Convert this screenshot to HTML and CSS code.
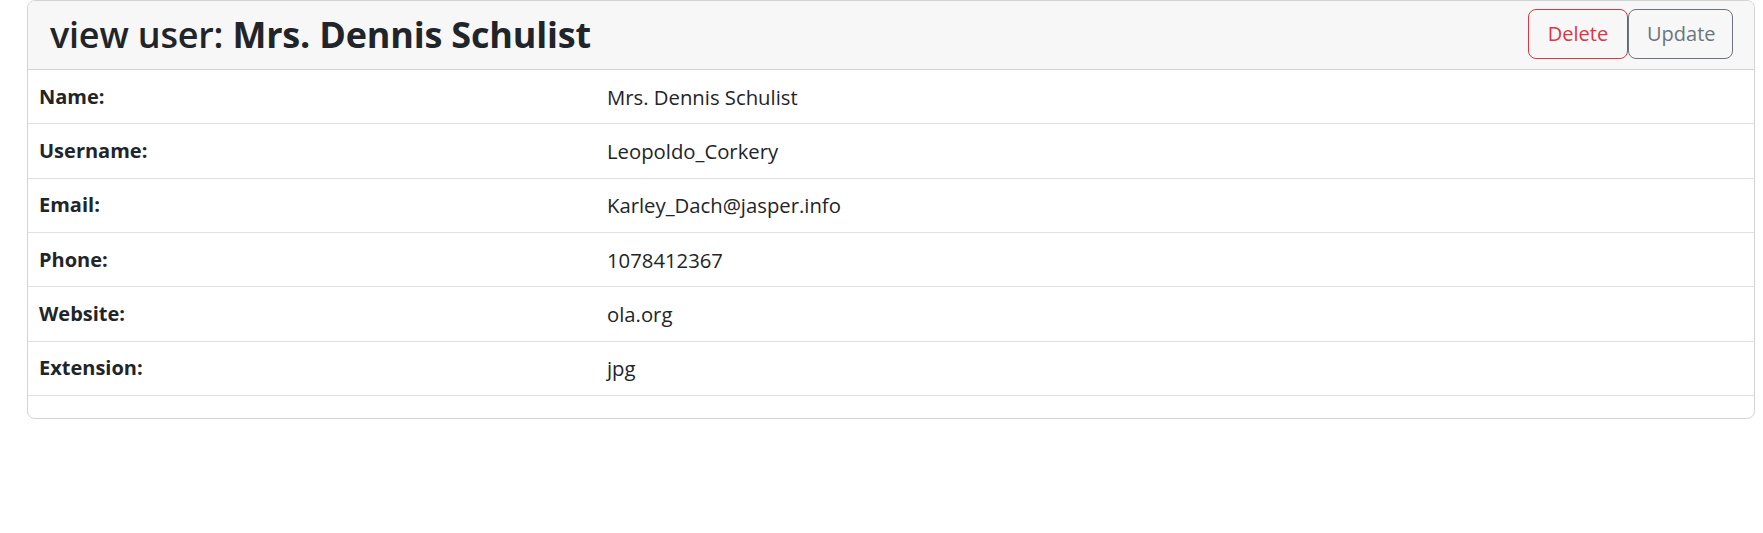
FILE: index.html
```html
<!DOCTYPE html>
<html lang="en">
<head>
<meta charset="utf-8">
<title>view user</title>
<link rel="stylesheet" href="styles.css">
</head>
<body>
<main class="page">
  <section class="card">
    <header class="card-header">
      <h3 class="title">view user: <strong>Mrs. Dennis Schulist</strong></h3>
      <div class="actions">
        <button class="btn btn-danger" type="button">Delete</button>
        <button class="btn btn-secondary" type="button">Update</button>
      </div>
    </header>
    <div class="card-body">
      <div class="table">
        <div class="row"><div class="cell label">Name:</div><div class="cell value">Mrs. Dennis Schulist</div></div>
        <div class="row"><div class="cell label">Username:</div><div class="cell value">Leopoldo_Corkery</div></div>
        <div class="row"><div class="cell label">Email:</div><div class="cell value">Karley_Dach@jasper.info</div></div>
        <div class="row"><div class="cell label">Phone:</div><div class="cell value">1078412367</div></div>
        <div class="row"><div class="cell label">Website:</div><div class="cell value">ola.org</div></div>
        <div class="row"><div class="cell label">Extension:</div><div class="cell value">jpg</div></div>
      </div>
    </div>
  </section>
</main>
</body>
</html>
```

FILE: styles.css
```css
* { box-sizing: border-box; }
html, body { margin: 0; padding: 0; background: #fff; }
body {
  font-family: "Open Sans", "Noto Sans", "DejaVu Sans", sans-serif;
  color: #212529;
  font-size: 20px;
}
.page {
  padding: 0 8px 0 27px;
}
.card {
  width: 1728px;
  border: 1px solid #d3d3d3;
  border-radius: 8px;
  overflow: hidden;
  background: #fff;
}
.card-header {
  display: flex;
  align-items: center;
  justify-content: space-between;
  height: 69px;
  padding: 0 21px 0 22px;
  background: #f7f7f7;
  border-bottom: 1px solid #d3d3d3;
}
.title {
  margin: 0;
  font-size: 36px;
  font-weight: 600;
  line-height: 48px;
  letter-spacing: -0.2px;
}
.title strong { font-weight: 700; }
.actions { display: flex; align-self: flex-start; margin-top: 8px; }
.btn {
  font-family: inherit;
  font-size: 20px;
  height: 50px;
  padding: 0 18px;
  background: transparent;
  border: 1px solid;
  border-radius: 8px;
  line-height: 1;
}
.btn-danger { color: #dc3545; border-color: #dc3545; width: 100px; }
.btn-secondary { color: #6c757d; border-color: #6c757d; width: 105px; }
.card-body { padding-bottom: 22px; }
.table { display: flex; flex-direction: column; }
.row {
  display: grid;
  grid-template-columns: 568px 1fr;
  border-bottom: 1px solid #dee2e6;
}
.cell {
  padding: 10.67px 11px;
  line-height: 32px;
  font-size: 20px;
}
.label { font-weight: 700; padding-left: 11px; }
.value { padding-left: 11px; font-size: 20.3px; }
```
